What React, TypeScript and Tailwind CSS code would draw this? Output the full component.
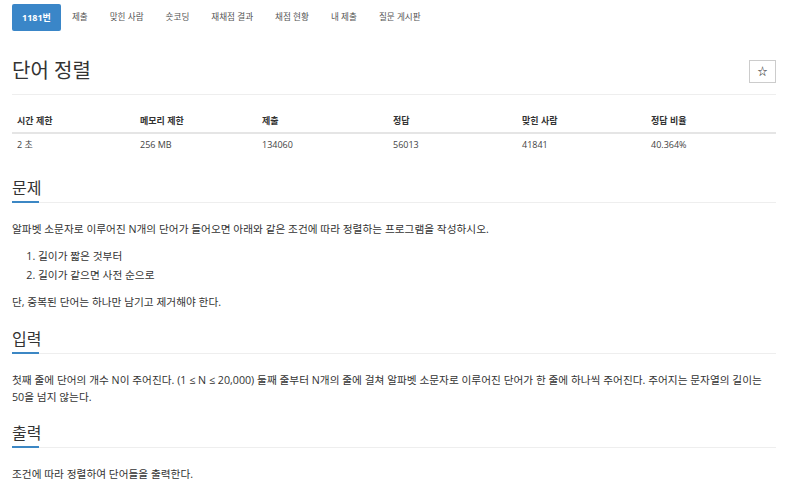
import React from "react";

const tabs = ["1181번", "제출", "맞힌 사람", "숏코딩", "재채점 결과", "채점 현황", "내 제출", "질문 게시판"];

const columns = [
  { label: "시간 제한", value: "2 초", w: "w-[123px]" },
  { label: "메모리 제한", value: "256 MB", w: "w-[122px]" },
  { label: "제출", value: "134060", w: "w-[131px]" },
  { label: "정답", value: "56013", w: "w-[129px]" },
  { label: "맞힌 사람", value: "41841", w: "w-[129px]" },
  { label: "정답 비율", value: "40.364%", w: "flex-1" },
];

const Heading = ({ children }: { children: React.ReactNode }) => (
  <div className="relative border-b border-[#eeeeee] pb-[3px]">
    <h2 className="text-[16px] leading-[21px] text-[#333]">{children}</h2>
    <div className="absolute left-0 bottom-[-1px] h-[2px] w-[27px] bg-[#3c87c4]" />
  </div>
);

export default function App() {
  return (
    <div
      className="w-[800px] h-[496px] overflow-hidden bg-white pl-[12px] pr-[24px] text-[#333]"
      style={{ fontFamily: '"Open Sans", "Noto Sans CJK KR", sans-serif' }}
    >
      {/* Tabs */}
      <div className="flex items-center pt-[4px] text-[8.6px]">
        {tabs.map((t, i) => (
          <div
            key={t}
            className={
              i === 0
                ? "h-[27px] px-[10px] flex items-center bg-[#3a86c8] text-white font-bold rounded-[2px] text-[9px]"
                : "h-[27px] px-[11px] flex items-center text-[#555]"
            }
          >
            {t}
          </div>
        ))}
      </div>

      {/* Title */}
      <div className="mt-[27px] flex items-center justify-between border-b border-[#eeeeee] pb-[10px]">
        <h1 className="text-[20px] leading-[26px] text-[#333]">단어 정렬</h1>
        <button className="w-[27px] h-[23px] border border-[#cccccc] flex items-center justify-center text-[10px] text-[#222]">
          ☆
        </button>
      </div>

      {/* Info table */}
      <div className="mt-[19px] text-[9px]">
        <div className="flex border-b-2 border-[#e5e5e5] pb-[4px]">
          {columns.map((c) => (
            <div key={c.label} className={`${c.w} pl-[5px] font-bold text-[#333]`}>
              {c.label}
            </div>
          ))}
        </div>
        <div className="flex pt-[4px] pb-[8px]">
          {columns.map((c) => (
            <div key={c.label} className={`${c.w} pl-[5px] text-[#444]`}>
              {c.value}
            </div>
          ))}
        </div>
      </div>

      {/* Problem */}
      <div className="mt-[19px]">
        <Heading>문제</Heading>
        <div className="text-[10.7px] leading-[17px] text-[#333]">
          <p className="mt-[18px]">
            알파벳 소문자로 이루어진 N개의 단어가 들어오면 아래와 같은 조건에 따라 정렬하는 프로그램을 작성하시오.
          </p>
          <ol className="mt-[10px] pl-[26px] list-decimal">
            <li className="mb-[2px]">길이가 짧은 것부터</li>
            <li>길이가 같으면 사전 순으로</li>
          </ol>
          <p className="mt-[10px]">단, 중복된 단어는 하나만 남기고 제거해야 한다.</p>
        </div>
      </div>

      {/* Input */}
      <div className="mt-[18px]">
        <Heading>입력</Heading>
        <p className="mt-[18px] text-[10.7px] leading-[17px] text-[#333]">
          첫째 줄에 단어의 개수 N이 주어진다. (1 ≤ N ≤ 20,000) 둘째 줄부터 N개의 줄에 걸쳐 알파벳 소문자로 이루어진 단어가 한 줄에 하나씩 주어진다. 주어지는 문자열의 길이는 50을 넘지 않는다.
        </p>
      </div>

      {/* Output */}
      <div className="mt-[17px]">
        <Heading>출력</Heading>
        <p className="mt-[18px] text-[10.7px] leading-[17px] text-[#333]">
          조건에 따라 정렬하여 단어들을 출력한다.
        </p>
      </div>
    </div>
  );
}
